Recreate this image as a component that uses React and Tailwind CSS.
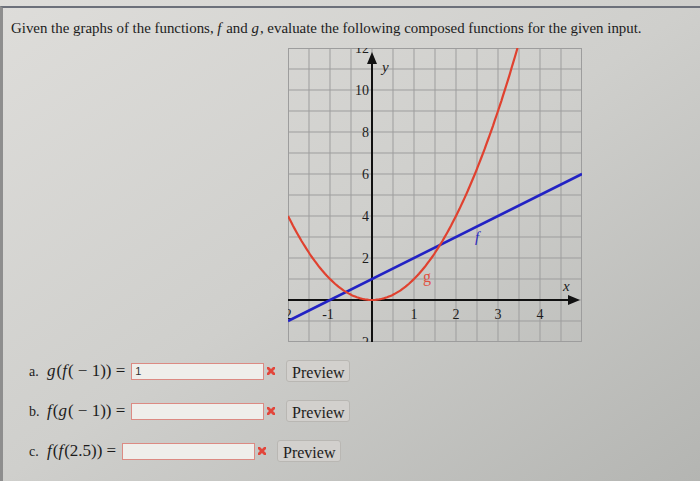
import React from "react";

const U = 42; // px per x unit
const V = 21; // px per y unit
const px = (x) => (x + 2) * U;
const py = (y) => (12 - y) * V;

const vLines = Array.from({ length: 15 }, (_, i) => -2 + i * 0.5);
const hLines = Array.from({ length: 15 }, (_, i) => -2 + i);

const parabola = (() => {
  const pts = [];
  for (let x = -2; x <= Math.sqrt(12) + 0.001; x += 0.04) {
    pts.push(`${px(x).toFixed(1)},${py(x * x).toFixed(1)}`);
  }
  pts.push(`${px(Math.sqrt(12)).toFixed(1)},${py(12).toFixed(1)}`);
  return pts.join(" ");
})();

function Graph() {
  return (
    <svg width="294" height="294" viewBox="0 0 294 294" className="block">
      {vLines.map((x) => (
        <line
          key={"v" + x}
          x1={Math.min(Math.max(px(x), 0.5), 293.5)}
          x2={Math.min(Math.max(px(x), 0.5), 293.5)}
          y1="0"
          y2="294"
          stroke="#9d9d9d"
          strokeWidth="1"
        />
      ))}
      {hLines.map((y) => (
        <line
          key={"h" + y}
          x1="0"
          x2="294"
          y1={Math.min(Math.max(py(y), 0.5), 293.5)}
          y2={Math.min(Math.max(py(y), 0.5), 293.5)}
          stroke="#9d9d9d"
          strokeWidth="1"
        />
      ))}

      {/* axes */}
      <line x1="0" x2="284" y1={py(0)} y2={py(0)} stroke="#111" strokeWidth="2" />
      <polygon points={`292,${py(0)} 280,${py(0) - 5} 280,${py(0) + 5}`} fill="#111" />
      <line x1={px(0)} x2={px(0)} y1="12" y2="294" stroke="#111" strokeWidth="2" />
      <polygon points={`${px(0)},4 ${px(0) - 5},16 ${px(0) + 5},16`} fill="#111" />

      {/* y labels */}
      <g fontFamily="'Liberation Serif', serif" fontSize="14" fill="#1c1c1c" textAnchor="end">
        {[12, 10, 8, 6, 4, 2, -2].map((y) => (
          <text key={y} x={px(0) - 3} y={py(y) + 5}>
            {y}
          </text>
        ))}
      </g>
      {/* x labels */}
      <g fontFamily="'Liberation Serif', serif" fontSize="14" fill="#1c1c1c" textAnchor="middle">
        {[-2, -1, 1, 2, 3, 4].map((x) => (
          <text key={x} x={px(x) + (x < 0 ? -2 : 0)} y={py(0) + 19}>
            {x}
          </text>
        ))}
      </g>

      <text x={px(0) + 10} y="24" fontFamily="'Liberation Serif', serif" fontStyle="italic" fontSize="15" fill="#1c1c1c">
        y
      </text>
      <text x="275" y={py(0) - 9} fontFamily="'Liberation Serif', serif" fontStyle="italic" fontSize="15" fill="#1c1c1c">
        x
      </text>

      {/* f(x) = x + 1 */}
      <line x1={px(-2)} y1={py(-1)} x2={px(5)} y2={py(6)} stroke="#2222c4" strokeWidth="2.6" />
      {/* g(x) = x^2 */}
      <polyline points={parabola} fill="none" stroke="#e0412f" strokeWidth="2.2" />

      <text x="187" y="194" fontFamily="'Liberation Serif', serif" fontStyle="italic" fontSize="15" fill="#2a2ac0">
        f
      </text>
      <text x="135" y="234" fontFamily="'Liberation Serif', serif" fontSize="16" fill="#e0503f">
        g
      </text>
    </svg>
  );
}

function Cross() {
  return (
    <svg width="8" height="8" viewBox="0 0 8 8" className="shrink-0">
      <path d="M1 1 L7 7 M7 1 L1 7" stroke="#e2463b" strokeWidth="2.8" strokeLinecap="square" />
    </svg>
  );
}

function Row({ tag, children, value }) {
  return (
    <div className="flex h-[22px] items-center pl-[26px] font-['Liberation_Serif',serif] text-[#1c1c1c]">
      <span className="w-[18px] text-[14px]">{tag}</span>
      <span className="text-[17px] whitespace-pre">{children}</span>
      <div className="ml-[6px] flex h-[17px] w-[133px] items-center border border-[#dc8a83] bg-[#efeeeb] pl-[3px] font-['Liberation_Sans',sans-serif] text-[11px] text-[#333]">
        {value}
      </div>
      <span className="ml-[3px]">
        <Cross />
      </span>
      <button className="ml-[11px] h-[22px] w-[64px] rounded-[3px] border border-[#b9b7b3] bg-[#d2d0cd] text-[16px] text-[#1c1c1c]">
        Preview
      </button>
    </div>
  );
}

const I = ({ children }) => <i className="pr-[1px]">{children}</i>;

export default function App() {
  return (
    <div className="h-[481px] w-[700px] overflow-hidden bg-linear-to-br from-[#deddda] via-[#cfcfcc] to-[#b4b5b2]">
      <div className="mt-[6px] h-full border-t-2 border-l-[3px] border-t-[#6c707a] border-l-[#8e8e8e]">
        <p className="pl-[8px] pt-[10px] font-['Liberation_Serif',serif] text-[14.9px] leading-[20px] text-[#1c1c1c]">
          Given the graphs of the functions, <I>f</I> and <I>g</I>, evaluate the following composed functions for the given input.
        </p>
        <div className="ml-[285px] mt-[10px]">
          <Graph />
        </div>
        <div className="mt-[18px] flex flex-col gap-[18px]">
          <Row tag="a." value="1">
            <I>g</I>(<I>f</I>( − 1)) = 
          </Row>
          <Row tag="b.">
            <I>f</I>(<I>g</I>( − 1)) = 
          </Row>
          <Row tag="c.">
            <I>f</I>(<I>f</I>(2.5)) = 
          </Row>
        </div>
      </div>
    </div>
  );
}
